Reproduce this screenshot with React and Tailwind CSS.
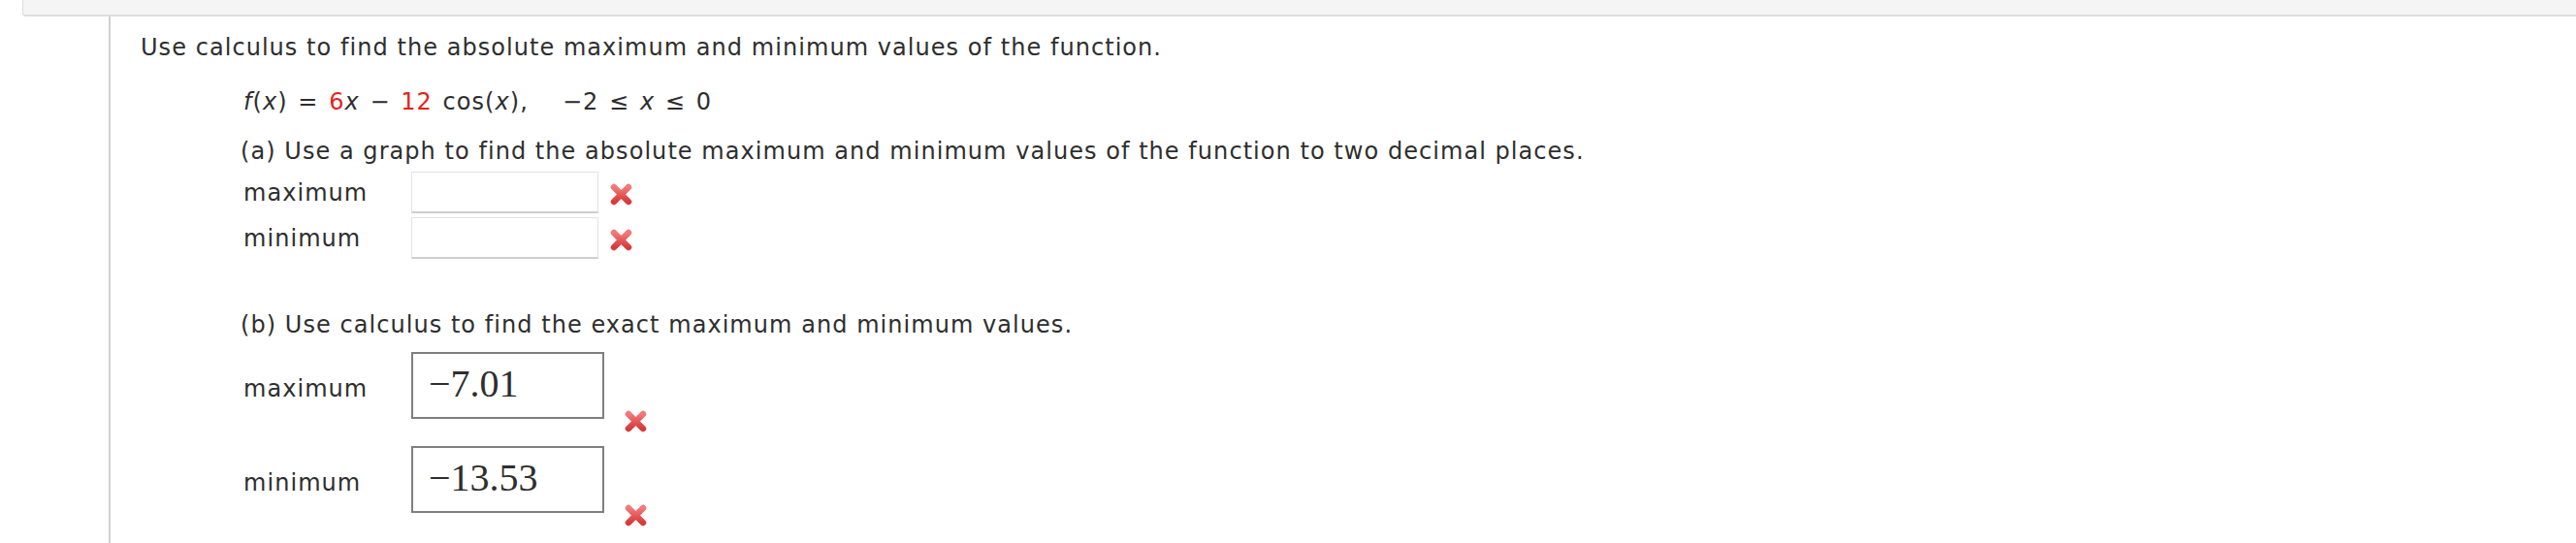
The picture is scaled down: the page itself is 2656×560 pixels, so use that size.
import React from "react";

const RedX = ({ className = "" }) => (
  <svg width="27" height="27" viewBox="0 0 27 27" className={className}>
    <defs>
      <linearGradient id="xg" x1="0" y1="0" x2="0" y2="1">
        <stop offset="0" stopColor="#f27a7a" />
        <stop offset="1" stopColor="#d83a3a" />
      </linearGradient>
    </defs>
    <path
      d="M6 6 L21 21 M21 6 L6 21"
      stroke="url(#xg)"
      strokeWidth="6.5"
      strokeLinecap="round"
      fill="none"
    />
  </svg>
);

const Label = ({ children, className = "" }) => (
  <div className={`w-[173px] shrink-0 leading-[34px] ${className}`}>{children}</div>
);

const App = () => {
  return (
    <div className="min-h-[560px] bg-white pl-[23px] font-['DejaVu_Sans',sans-serif] text-[24px] tracking-[1.05px] text-[#2e2e2e]">
      {/* top bar */}
      <div className="h-[17px] bg-[#f5f5f5] border-b-2 border-l border-[#dedede] rounded-bl-[4px]" />

      <div className="ml-[89px] border-l-2 border-[#d0d0d0] pl-[31px] min-h-[543px]">
        <p className="pt-[15px] leading-[34px]">
          Use calculus to find the absolute maximum and minimum values of the function.
        </p>

        <p className="mt-[22px] ml-[106px] leading-[34px] whitespace-pre [word-spacing:2px]">
          <span className="italic">f</span>(<span className="italic">x</span>) ={" "}
          <span className="text-[#e3231c]">6</span>
          <span className="italic">x</span> − <span className="text-[#e3231c]">12</span> cos(
          <span className="italic">x</span>),
          <span className="ml-[35px]">
            −2 ≤ <span className="italic">x</span> ≤ 0
          </span>
        </p>

        {/* part a */}
        <p className="mt-[17px] ml-[103px] leading-[34px]">
          (a) Use a graph to find the absolute maximum and minimum values of the function to two decimal places.
        </p>
        <div className="mt-[4px] ml-[106px] flex flex-col gap-[4px]">
          <div className="flex items-center h-[43px]">
            <Label>maximum</Label>
            <input
              type="text"
              className="w-[193px] h-[43px] border border-[#e3e3e3] border-b-2 border-b-[#cfcfcf] outline-none"
            />
            <RedX className="ml-[10px] mt-[4px]" />
          </div>
          <div className="flex items-center h-[43px]">
            <Label>minimum</Label>
            <input
              type="text"
              className="w-[193px] h-[43px] border border-[#e3e3e3] border-b-2 border-b-[#cfcfcf] outline-none"
            />
            <RedX className="ml-[10px] mt-[4px]" />
          </div>
        </div>

        {/* part b */}
        <p className="mt-[51px] ml-[103px] leading-[34px]">
          (b) Use calculus to find the exact maximum and minimum values.
        </p>
        <div className="mt-[11px] ml-[106px] flex flex-col gap-[12px]">
          <div className="flex items-start">
            <Label className="mt-[21px]">maximum</Label>
            <div className="w-[199px] h-[69px] border-2 border-[#7f7f7f] pl-[16px] pt-[9px] font-['Liberation_Serif',serif] text-[40px] leading-[44px] tracking-normal">
              −7.01
            </div>
            <RedX className="ml-[19px] mt-[58px]" />
          </div>
          <div className="flex items-start">
            <Label className="mt-[21px]">minimum</Label>
            <div className="w-[199px] h-[69px] border-2 border-[#7f7f7f] pl-[16px] pt-[9px] font-['Liberation_Serif',serif] text-[40px] leading-[44px] tracking-normal">
              −13.53
            </div>
            <RedX className="ml-[19px] mt-[58px]" />
          </div>
        </div>
      </div>
    </div>
  );
};

export default App;
